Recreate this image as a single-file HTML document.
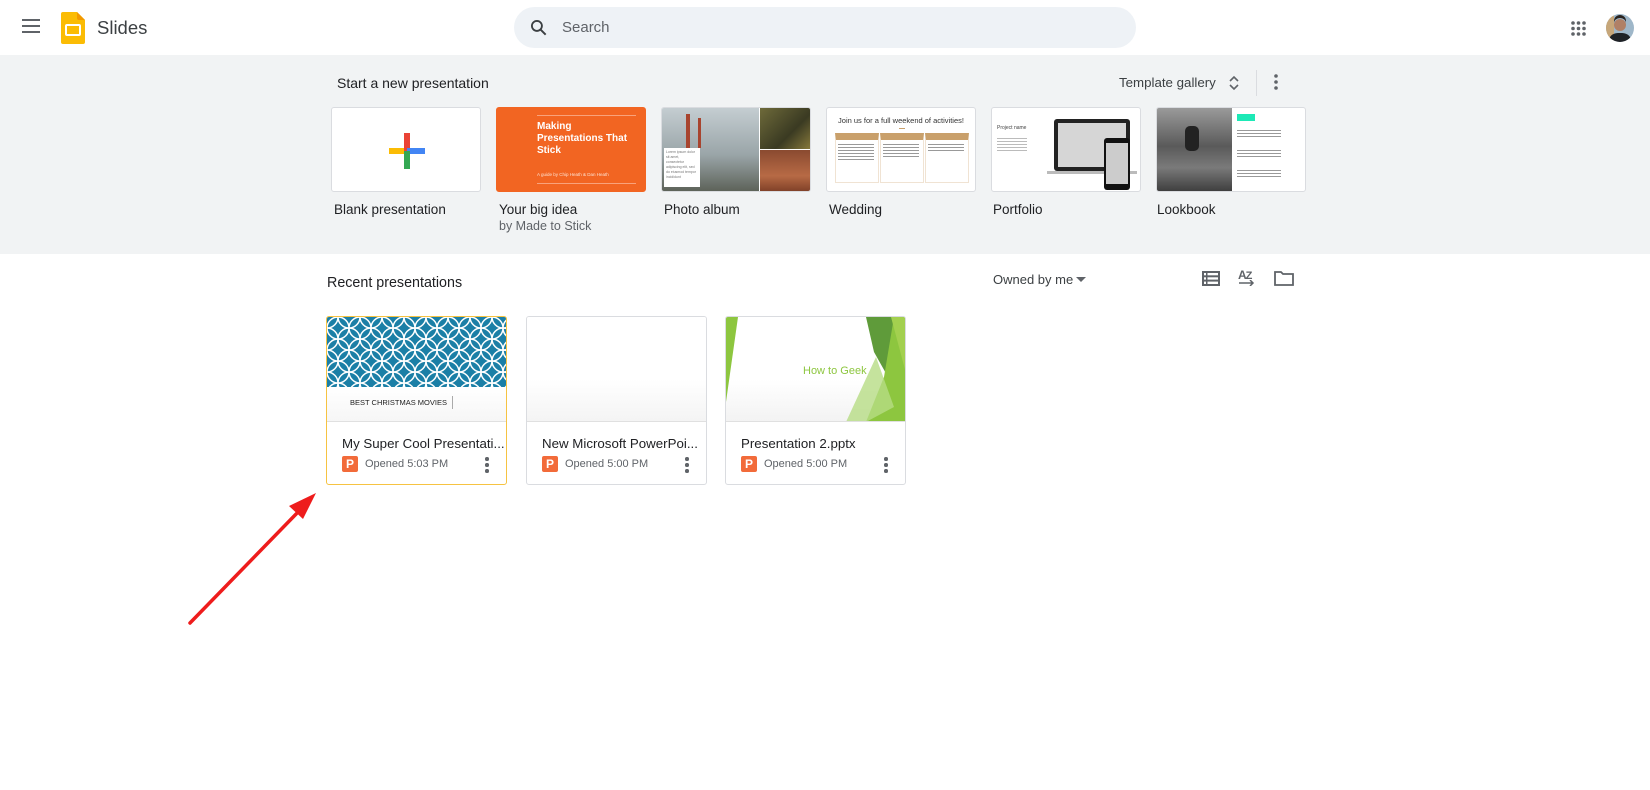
<!DOCTYPE html>
<html><head><meta charset="utf-8">
<style>
*{box-sizing:border-box;margin:0;padding:0}
body{width:1650px;height:790px;overflow:hidden;background:#fff;font-family:"Liberation Sans",Arial,sans-serif;color:#202124;position:relative}
.abs{position:absolute}
.hdr{left:0;top:0;width:1650px;height:55px;background:#fff}
.band{left:0;top:55px;width:1650px;height:199px;background:#f1f3f4}
.thumb{position:absolute;top:107px;width:150px;height:85px;background:#fff;border:1px solid #dadce0;border-radius:3px;overflow:hidden}
.tl{position:absolute;top:202px;font-size:13.5px;color:#202124}
.ts{position:absolute;top:219px;font-size:12.5px;color:#5f6368}
.card{position:absolute;top:316px;width:181px;height:169px;border:1px solid #dadce0;border-radius:3px;background:#fff;overflow:hidden}
.card .pv{position:absolute;left:0;top:0;width:100%;height:105px;border-bottom:1px solid #e0e0e0;overflow:hidden}
.card .t{position:absolute;left:15px;top:119px;font-size:13.3px;color:#202124;white-space:nowrap}
.card .p{position:absolute;left:15px;top:139px;width:16px;height:16px;background:#f26b3a;border-radius:2px;color:#fff;font-size:12px;font-weight:bold;text-align:center;line-height:16px}
.card .m{position:absolute;left:38px;top:141px;font-size:11px;color:#5f6368}
.card .d{position:absolute;right:17px;top:140px;width:4px}
.card .d i{display:block;width:3.5px;height:3.5px;border-radius:50%;background:#5f6368;margin-bottom:2.5px}
</style></head><body>

<div class="abs hdr"></div>
<svg class="abs" style="left:22px;top:19px" width="18" height="14"><rect y="0" width="18" height="2" fill="#5f6368"/><rect y="6" width="18" height="2" fill="#5f6368"/><rect y="12" width="18" height="2" fill="#5f6368"/></svg>
<svg class="abs" style="left:61px;top:12px" width="24" height="32" viewBox="0 0 24 32"><path d="M2 0h14l8 8v22a2 2 0 0 1-2 2H2a2 2 0 0 1-2-2V2a2 2 0 0 1 2-2z" fill="#fbbc04"/><path d="M16 0l8 8h-6a2 2 0 0 1-2-2z" fill="#f29900"/><rect x="5" y="13" width="14" height="10" rx="1" fill="none" stroke="#fff" stroke-width="2"/></svg>
<div class="abs" style="left:97px;top:17px;font-size:18.5px;color:#3c4043">Slides</div>
<div class="abs" style="left:514px;top:7px;width:622px;height:41px;background:#eef2f6;border-radius:21px"></div>
<svg class="abs" style="left:529px;top:18px" width="20" height="20" viewBox="0 0 24 24"><circle cx="9.5" cy="9.5" r="6" fill="none" stroke="#3c4043" stroke-width="2.2"/><path d="M14 14l6 6" stroke="#3c4043" stroke-width="2.4"/></svg>
<div class="abs" style="left:562px;top:19px;font-size:15px;color:#5f6368">Search</div>
<svg class="abs" style="left:1571px;top:21px" width="15" height="15"><g fill="#5f6368"><circle cx="2" cy="2" r="1.8"/><circle cx="7.5" cy="2" r="1.8"/><circle cx="13" cy="2" r="1.8"/><circle cx="2" cy="7.5" r="1.8"/><circle cx="7.5" cy="7.5" r="1.8"/><circle cx="13" cy="7.5" r="1.8"/><circle cx="2" cy="13" r="1.8"/><circle cx="7.5" cy="13" r="1.8"/><circle cx="13" cy="13" r="1.8"/></g></svg>
<svg class="abs" style="left:1606px;top:14px" width="28" height="28"><defs><clipPath id="av"><circle cx="14" cy="14" r="14"/></clipPath></defs><g clip-path="url(#av)"><rect width="28" height="28" fill="#9fb7c9"/><rect x="0" y="0" width="8" height="28" fill="#c7a77a"/><circle cx="14" cy="11" r="6" fill="#b08066"/><path d="M8 9a6 5 0 0 1 12 0v-2a6 6 0 0 0-12 0z" fill="#2a2420"/><path d="M2 28c2-8 6-9 12-9s10 1 12 9z" fill="#1f2226"/></g></svg>

<div class="abs band"></div>
<div class="abs" style="left:337px;top:75px;font-size:14px;color:#202124">Start a new presentation</div>
<div class="abs" style="left:1119px;top:75px;font-size:13.3px;color:#3c4043">Template gallery</div>
<svg class="abs" style="left:1229px;top:75px" width="10" height="16"><path d="M1 6l4-4 4 4M1 10l4 4 4-4" fill="none" stroke="#5f6368" stroke-width="1.6"/></svg>
<div class="abs" style="left:1256px;top:70px;width:1px;height:26px;background:#dadce0"></div>
<svg class="abs" style="left:1274px;top:74px" width="4" height="16"><g fill="#5f6368"><circle cx="2" cy="2" r="1.8"/><circle cx="2" cy="8" r="1.8"/><circle cx="2" cy="14" r="1.8"/></g></svg>

<div class="thumb" style="left:331px">
<svg style="position:absolute;left:57px;top:25px" width="36" height="36"><rect x="15" y="0" width="6" height="18" fill="#ea4335"/><rect x="0" y="15" width="18" height="6" fill="#fbbc04"/><rect x="18" y="15" width="18" height="6" fill="#4285f4"/><rect x="15" y="18" width="6" height="18" fill="#34a853"/><rect x="15" y="15" width="3" height="3" fill="#ea4335"/></svg>
</div>
<div class="thumb" style="left:496px;background:#f26522;border-color:#f26522">
<div style="position:absolute;left:40px;top:7px;width:99px;height:1px;background:#f9a27b"></div>
<div style="position:absolute;left:40px;top:13px;color:#fff;font-size:10px;font-weight:bold;line-height:12px">Making<br>Presentations That<br>Stick</div>
<div style="position:absolute;left:40px;top:64px;color:#fde0d0;font-size:4.5px">A guide by Chip Heath &amp; Dan Heath</div>
<div style="position:absolute;left:40px;top:75px;width:99px;height:1px;background:#f9a27b"></div>
</div>
<div class="thumb" style="left:661px">
<div style="position:absolute;left:0;top:0;width:97px;height:85px;background:linear-gradient(180deg,#c4cdd1 0%,#9aa5a8 55%,#5a5f55 100%)"></div>
<div style="position:absolute;left:24px;top:6px;width:4px;height:42px;background:#a8442e"></div>
<div style="position:absolute;left:36px;top:10px;width:3px;height:30px;background:#a8442e"></div>
<div style="position:absolute;left:2px;top:40px;width:36px;height:39px;background:#fff;font-size:3.5px;color:#777;padding:2px;line-height:5px">Lorem ipsum dolor sit amet, consectetur adipiscing elit, sed do eiusmod tempor incididunt</div>
<div style="position:absolute;left:98px;top:0;width:52px;height:41px;background:linear-gradient(135deg,#6e6a3a,#3a3a22 60%,#8a7c3c)"></div>
<div style="position:absolute;left:98px;top:42px;width:52px;height:43px;background:linear-gradient(180deg,#8a4a30,#b76a45 60%,#7a3c25)"></div>
</div>
<div class="thumb" style="left:826px">
<div style="position:absolute;left:0;top:8px;width:100%;text-align:center;font-size:7.5px;color:#333">Join us for a full weekend of activities!</div>
<div style="position:absolute;left:72px;top:20px;width:6px;height:1px;background:#c9a06b"></div>
<div style="position:absolute;left:8px;top:25px;width:44px;height:50px;border:1px solid #f0e3d3;border-top:7px solid #c9a06b"></div>
<div style="position:absolute;left:53px;top:25px;width:44px;height:50px;border:1px solid #f0e3d3;border-top:7px solid #c9a06b"></div>
<div style="position:absolute;left:98px;top:25px;width:44px;height:50px;border:1px solid #f0e3d3;border-top:7px solid #c9a06b"></div>
<div style="position:absolute;left:11px;top:36px;width:36px;height:18px;background:repeating-linear-gradient(180deg,#999 0 1px,transparent 1px 3px)"></div>
<div style="position:absolute;left:56px;top:36px;width:36px;height:15px;background:repeating-linear-gradient(180deg,#999 0 1px,transparent 1px 3px)"></div>
<div style="position:absolute;left:101px;top:36px;width:36px;height:9px;background:repeating-linear-gradient(180deg,#999 0 1px,transparent 1px 3px)"></div>
</div>
<div class="thumb" style="left:991px">
<div style="position:absolute;left:5px;top:17px;font-size:5px;color:#444">Project name</div>
<div style="position:absolute;left:5px;top:30px;width:30px;height:14px;background:repeating-linear-gradient(180deg,#bbb 0 1px,transparent 1px 3px)"></div>
<div style="position:absolute;left:62px;top:11px;width:76px;height:52px;background:#222;border-radius:3px"></div>
<div style="position:absolute;left:66px;top:15px;width:68px;height:44px;background:#d6d6d6"></div>
<div style="position:absolute;left:55px;top:63px;width:90px;height:3px;background:#bbb"></div>
<div style="position:absolute;left:112px;top:30px;width:26px;height:52px;background:#111;border-radius:3px"></div>
<div style="position:absolute;left:114px;top:35px;width:22px;height:41px;background:#ccc"></div>
</div>
<div class="thumb" style="left:1156px">
<div style="position:absolute;left:0;top:0;width:75px;height:85px;background:linear-gradient(180deg,#9a9a9a 0%,#5a5a5a 45%,#7a7a7a 70%,#3a3a3a 100%)"></div>
<div style="position:absolute;left:28px;top:18px;width:14px;height:25px;background:#222;border-radius:5px"></div>
<div style="position:absolute;left:80px;top:6px;width:18px;height:7px;background:#1de9b6"></div>
<div style="position:absolute;left:80px;top:22px;width:44px;height:8px;background:repeating-linear-gradient(180deg,#999 0 1px,transparent 1px 3px)"></div>
<div style="position:absolute;left:80px;top:42px;width:44px;height:8px;background:repeating-linear-gradient(180deg,#999 0 1px,transparent 1px 3px)"></div>
<div style="position:absolute;left:80px;top:62px;width:44px;height:8px;background:repeating-linear-gradient(180deg,#999 0 1px,transparent 1px 3px)"></div>
</div>
<div class="tl" style="left:334px">Blank presentation</div>
<div class="tl" style="left:499px">Your big idea</div>
<div class="ts" style="left:499px">by Made to Stick</div>
<div class="tl" style="left:664px">Photo album</div>
<div class="tl" style="left:829px">Wedding</div>
<div class="tl" style="left:993px">Portfolio</div>
<div class="tl" style="left:1157px">Lookbook</div>

<div class="abs" style="left:327px;top:275px;font-size:14.3px;color:#202124">Recent presentations</div>
<div class="abs" style="left:993px;top:272px;font-size:13px;color:#3c4043">Owned by me</div>
<svg class="abs" style="left:1076px;top:277px" width="10" height="6"><path d="M0 0h10L5 5z" fill="#5f6368"/></svg>
<svg class="abs" style="left:1202px;top:271px" width="18" height="15"><g fill="#5f6368"><rect x="0" y="0" width="18" height="2"/><rect x="0" y="4.3" width="18" height="2"/><rect x="0" y="8.6" width="18" height="2"/><rect x="0" y="13" width="18" height="2"/><rect x="0" y="0" width="2" height="15"/><rect x="4" y="0" width="1.5" height="15"/><rect x="16" y="0" width="2" height="15"/></g></svg>
<div class="abs" style="left:1238px;top:268px;font-size:12px;color:#5f6368;font-weight:bold;letter-spacing:-1px">A<span style="font-size:11px">Z</span></div>
<svg class="abs" style="left:1238px;top:280px" width="18" height="6"><path d="M1 3h14M12 0l3 3-3 3" fill="none" stroke="#5f6368" stroke-width="1.5"/></svg>
<svg class="abs" style="left:1274px;top:270px" width="20" height="16"><path d="M1 2h6l2 2h10v11H1z" fill="none" stroke="#5f6368" stroke-width="1.8"/></svg>

<div class="card" style="left:326px;border:1.5px solid #f6c342">
<div class="pv">
<svg width="181" height="70" style="position:absolute;left:0;top:0"><defs><pattern id="rings" width="22" height="22" patternUnits="userSpaceOnUse"><rect width="22" height="22" fill="#1b7fa6"/><circle cx="0" cy="0" r="11" fill="none" stroke="#fff" stroke-width="1.5"/><circle cx="22" cy="0" r="11" fill="none" stroke="#fff" stroke-width="1.5"/><circle cx="0" cy="22" r="11" fill="none" stroke="#fff" stroke-width="1.5"/><circle cx="22" cy="22" r="11" fill="none" stroke="#fff" stroke-width="1.5"/><circle cx="11" cy="11" r="11" fill="none" stroke="#fff" stroke-width="1.5"/></pattern></defs><rect width="181" height="70" fill="url(#rings)"/></svg>
<div style="position:absolute;left:0;top:70px;width:100%;height:35px;background:linear-gradient(#fff,#f6f6f6)"></div>
<div style="position:absolute;left:23px;top:81px;font-size:7.5px;color:#222">BEST CHRISTMAS MOVIES</div>
<div style="position:absolute;left:125px;top:79px;width:1px;height:13px;background:#aaa"></div>
</div>
<div class="t">My Super Cool Presentati...</div>
<div class="p">P</div><div class="m">Opened 5:03 PM</div>
<div class="d"><i></i><i></i><i></i></div>
</div>
<div class="card" style="left:526px">
<div class="pv" style="background:linear-gradient(#fff 60%,#f4f4f4)"></div>
<div class="t">New Microsoft PowerPoi...</div>
<div class="p">P</div><div class="m">Opened 5:00 PM</div>
<div class="d"><i></i><i></i><i></i></div>
</div>
<div class="card" style="left:725px">
<div class="pv" style="background:linear-gradient(#fff 60%,#f3f3f3)">
<svg width="181" height="105" style="position:absolute;left:0;top:0"><polygon points="0,0 12,0 0,85" fill="#8dc63f"/><polygon points="140,0 170,0 162,60 148,35" fill="#5f9b3a"/><polygon points="168,0 181,0 181,105 140,105 158,60" fill="#8dc63f"/><polygon points="150,40 168,90 140,105 120,105" fill="#b6dc84" opacity=".8"/><polygon points="165,0 181,0 181,60" fill="#a3d04f"/></svg>
<div style="position:absolute;left:77px;top:48px;font-size:11px;color:#8dc63f">How to Geek</div>
</div>
<div class="t">Presentation 2.pptx</div>
<div class="p">P</div><div class="m">Opened 5:00 PM</div>
<div class="d"><i></i><i></i><i></i></div>
</div>

<svg class="abs" style="left:0;top:0" width="1650" height="790"><line x1="190" y1="623" x2="300" y2="510" stroke="#ee1c1c" stroke-width="3.5" stroke-linecap="round"/><polygon points="316,493 289,506 303,519" fill="#ee1c1c"/></svg>
</body></html>
